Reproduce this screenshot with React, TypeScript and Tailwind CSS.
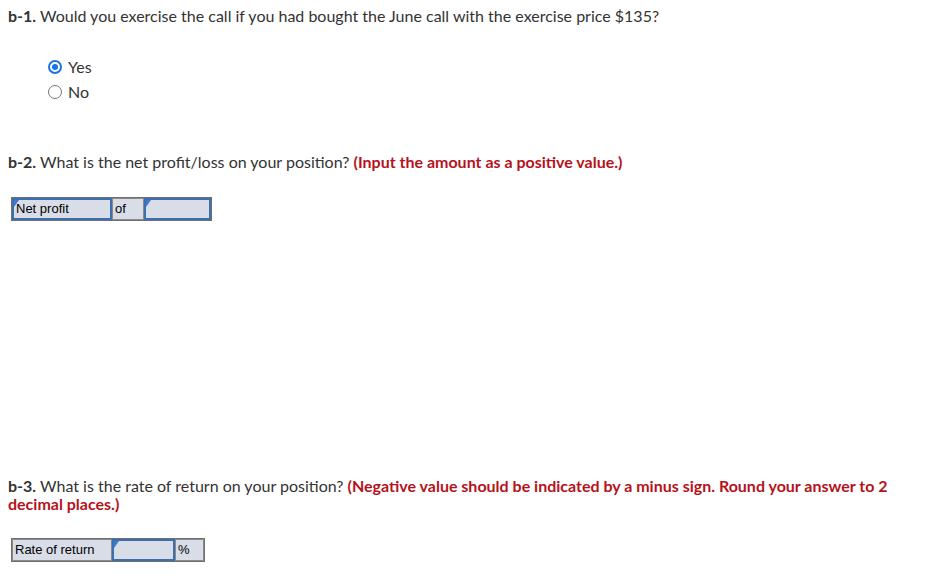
import { ReactNode } from "react";

const Corner = () => (
  <span className="absolute left-0 top-0 w-0 h-0 border-t-[7px] border-r-[5px] border-t-[#3a7bd5] border-r-transparent" />
);

const Cell = ({
  children,
  width,
  active,
  marker,
}: {
  children?: ReactNode;
  width: string;
  active?: boolean;
  marker?: boolean;
}) => (
  <div
    className={`relative h-full flex items-center px-[2px] bg-[#d9dde8] text-[13px] text-black ${width} ${
      active ? "border-2 border-[#3d6fb0]" : "border border-[#8a8a8a]"
    }`}
  >
    {marker && <Corner />}
    {children}
  </div>
);

export default function App() {
  return (
    <div className="w-[944px] h-[577px] bg-white px-2 pt-[7px] text-[16px] leading-[18px] text-[#333] font-['Lato','Open_Sans',sans-serif]">
      {/* b-1 */}
      <p>
        <b className="font-bold">b-1.</b> Would you exercise the call if you had bought the June call with the exercise price $135?
      </p>

      <div className="mt-[33px] ml-[40px] flex flex-col gap-[7px]">
        <label className="flex items-center gap-[6px]">
          <span className="w-[14px] h-[14px] rounded-full border-2 border-[#1a73e8] flex items-center justify-center">
            <span className="w-[6px] h-[6px] rounded-full bg-[#1a73e8]" />
          </span>
          Yes
        </label>
        <label className="flex items-center gap-[6px]">
          <span className="w-[14px] h-[14px] rounded-full border-[1.5px] border-[#767676]" />
          No
        </label>
      </div>

      {/* b-2 */}
      <p className="mt-[52px]">
        <b className="font-bold">b-2.</b> What is the net profit/loss on your position?{" "}
        <b className="font-bold text-[#b5121b]">(Input the amount as a positive value.)</b>
      </p>

      <div className="mt-[26px] ml-[3px] flex h-[24px] w-fit border border-[#6f6f6f] font-['Liberation_Sans',Arial,sans-serif]">
        <Cell width="w-[100px]" active marker>
          Net profit
        </Cell>
        <Cell width="w-[32px]">of</Cell>
        <Cell width="w-[67px]" active marker />
      </div>

      {/* b-3 */}
      <p className="mt-[256px]">
        <b className="font-bold">b-3.</b> What is the rate of return on your position?{" "}
        <b className="font-bold text-[#b5121b]">
          (Negative value should be indicated by a minus sign. Round your answer to 2 decimal places.)
        </b>
      </p>

      <div className="mt-[25px] ml-[3px] flex h-[24px] w-fit border border-[#6f6f6f] font-['Liberation_Sans',Arial,sans-serif]">
        <Cell width="w-[100px]">Rate of return</Cell>
        <Cell width="w-[63px]" active marker />
        <Cell width="w-[29px]">%</Cell>
      </div>
    </div>
  );
}
